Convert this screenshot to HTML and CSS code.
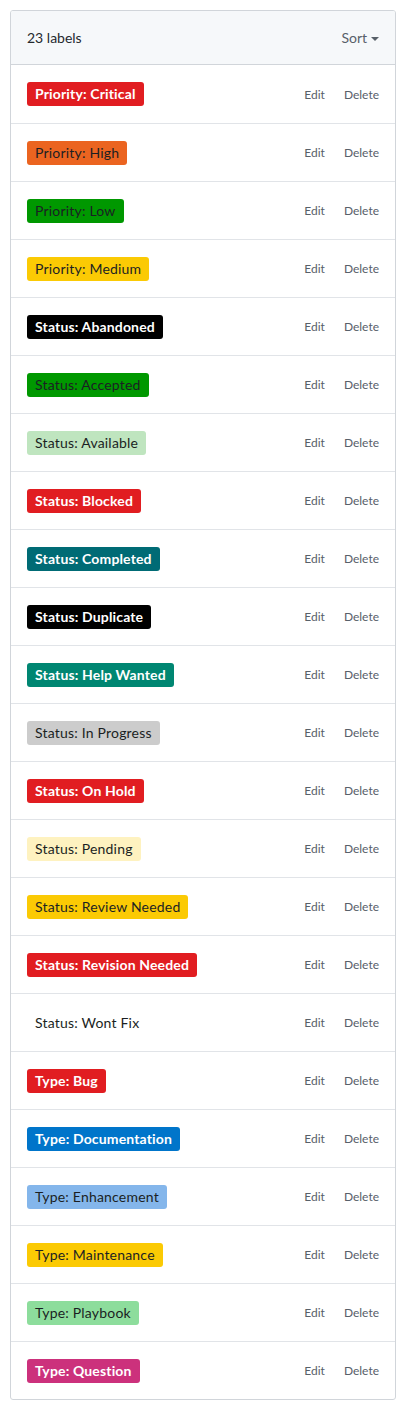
FILE: index.html
```html
<!DOCTYPE html>
<html>
<head>
<meta charset="utf-8">
<link rel="stylesheet" href="styles.css">
</head>
<body>
<div class="box">
  <div class="box-header">
    <span class="count">23 labels</span>
    <span class="sort">Sort <span class="caret"></span></span>
  </div>
  <ul class="list">
    <li class="row"><span class="label light" style="background:#e11d21">Priority: Critical</span><span class="actions"><a>Edit</a><a>Delete</a></span></li>
    <li class="row"><span class="label dark" style="background:#eb6420">Priority: High</span><span class="actions"><a>Edit</a><a>Delete</a></span></li>
    <li class="row"><span class="label dark" style="background:#009800">Priority: Low</span><span class="actions"><a>Edit</a><a>Delete</a></span></li>
    <li class="row"><span class="label dark" style="background:#fbca04">Priority: Medium</span><span class="actions"><a>Edit</a><a>Delete</a></span></li>
    <li class="row"><span class="label light" style="background:#000000">Status: Abandoned</span><span class="actions"><a>Edit</a><a>Delete</a></span></li>
    <li class="row"><span class="label dark" style="background:#009800">Status: Accepted</span><span class="actions"><a>Edit</a><a>Delete</a></span></li>
    <li class="row"><span class="label dark" style="background:#bfe5bf">Status: Available</span><span class="actions"><a>Edit</a><a>Delete</a></span></li>
    <li class="row"><span class="label light" style="background:#e11d21">Status: Blocked</span><span class="actions"><a>Edit</a><a>Delete</a></span></li>
    <li class="row"><span class="label light" style="background:#006b75">Status: Completed</span><span class="actions"><a>Edit</a><a>Delete</a></span></li>
    <li class="row"><span class="label light" style="background:#000000">Status: Duplicate</span><span class="actions"><a>Edit</a><a>Delete</a></span></li>
    <li class="row"><span class="label light" style="background:#008672">Status: Help Wanted</span><span class="actions"><a>Edit</a><a>Delete</a></span></li>
    <li class="row"><span class="label dark" style="background:#cccccc">Status: In Progress</span><span class="actions"><a>Edit</a><a>Delete</a></span></li>
    <li class="row"><span class="label light" style="background:#e11d21">Status: On Hold</span><span class="actions"><a>Edit</a><a>Delete</a></span></li>
    <li class="row"><span class="label dark" style="background:#fef2c0">Status: Pending</span><span class="actions"><a>Edit</a><a>Delete</a></span></li>
    <li class="row"><span class="label dark" style="background:#fbca04">Status: Review Needed</span><span class="actions"><a>Edit</a><a>Delete</a></span></li>
    <li class="row"><span class="label light" style="background:#e11d21">Status: Revision Needed</span><span class="actions"><a>Edit</a><a>Delete</a></span></li>
    <li class="row"><span class="label dark" style="background:#ffffff">Status: Wont Fix</span><span class="actions"><a>Edit</a><a>Delete</a></span></li>
    <li class="row"><span class="label light" style="background:#e11d21">Type: Bug</span><span class="actions"><a>Edit</a><a>Delete</a></span></li>
    <li class="row"><span class="label light" style="background:#0075ca">Type: Documentation</span><span class="actions"><a>Edit</a><a>Delete</a></span></li>
    <li class="row"><span class="label dark" style="background:#84b6eb">Type: Enhancement</span><span class="actions"><a>Edit</a><a>Delete</a></span></li>
    <li class="row"><span class="label dark" style="background:#fbca04">Type: Maintenance</span><span class="actions"><a>Edit</a><a>Delete</a></span></li>
    <li class="row"><span class="label dark" style="background:#8ddd9c">Type: Playbook</span><span class="actions"><a>Edit</a><a>Delete</a></span></li>
    <li class="row"><span class="label light" style="background:#cc317c">Type: Question</span><span class="actions"><a>Edit</a><a>Delete</a></span></li>
  </ul>
</div>
</body>
</html>
```
FILE: styles.css
```css
* { box-sizing: border-box; }
body {
  margin: 10px;
  width: 386px;
  font-family: Lato, "Noto Sans", sans-serif;
  color: #24292e;
  background: #fff;
}
.box {
  border: 1px solid #d1d5da;
  border-radius: 3px;
  overflow: hidden;
}
.box-header {
  display: flex;
  justify-content: space-between;
  align-items: center;
  height: 54px;
  padding: 0 16px;
  background: #f6f8fa;
  border-bottom: 1px solid #d1d5da;
  font-size: 14px;
}
.count { color: #24292e; }
.sort {
  color: #586069;
  display: flex;
  align-items: center;
  gap: 4px;
}
.caret {
  width: 0;
  height: 0;
  border-left: 4px solid transparent;
  border-right: 4px solid transparent;
  border-top: 4px solid #586069;
  margin-top: 2px;
}
.list {
  list-style: none;
  margin: 0;
  padding: 0;
}
.row {
  display: flex;
  justify-content: space-between;
  align-items: center;
  height: 58px;
  padding: 0 16px;
  border-top: 1px solid #e1e4e8;
}
.row:first-child { border-top: none; }
.label {
  display: inline-block;
  font-size: 14px;
  line-height: 24px;
  padding: 0 8px;
  border-radius: 3px;
}
.label.light { color: #fff; font-weight: 700; letter-spacing: 0.15px; }
.label.dark { color: #1b1f23; font-weight: 400; letter-spacing: 0.2px; }
.actions {
  display: flex;
  gap: 19px;
  font-size: 12px;
  color: #586069;
}
```
